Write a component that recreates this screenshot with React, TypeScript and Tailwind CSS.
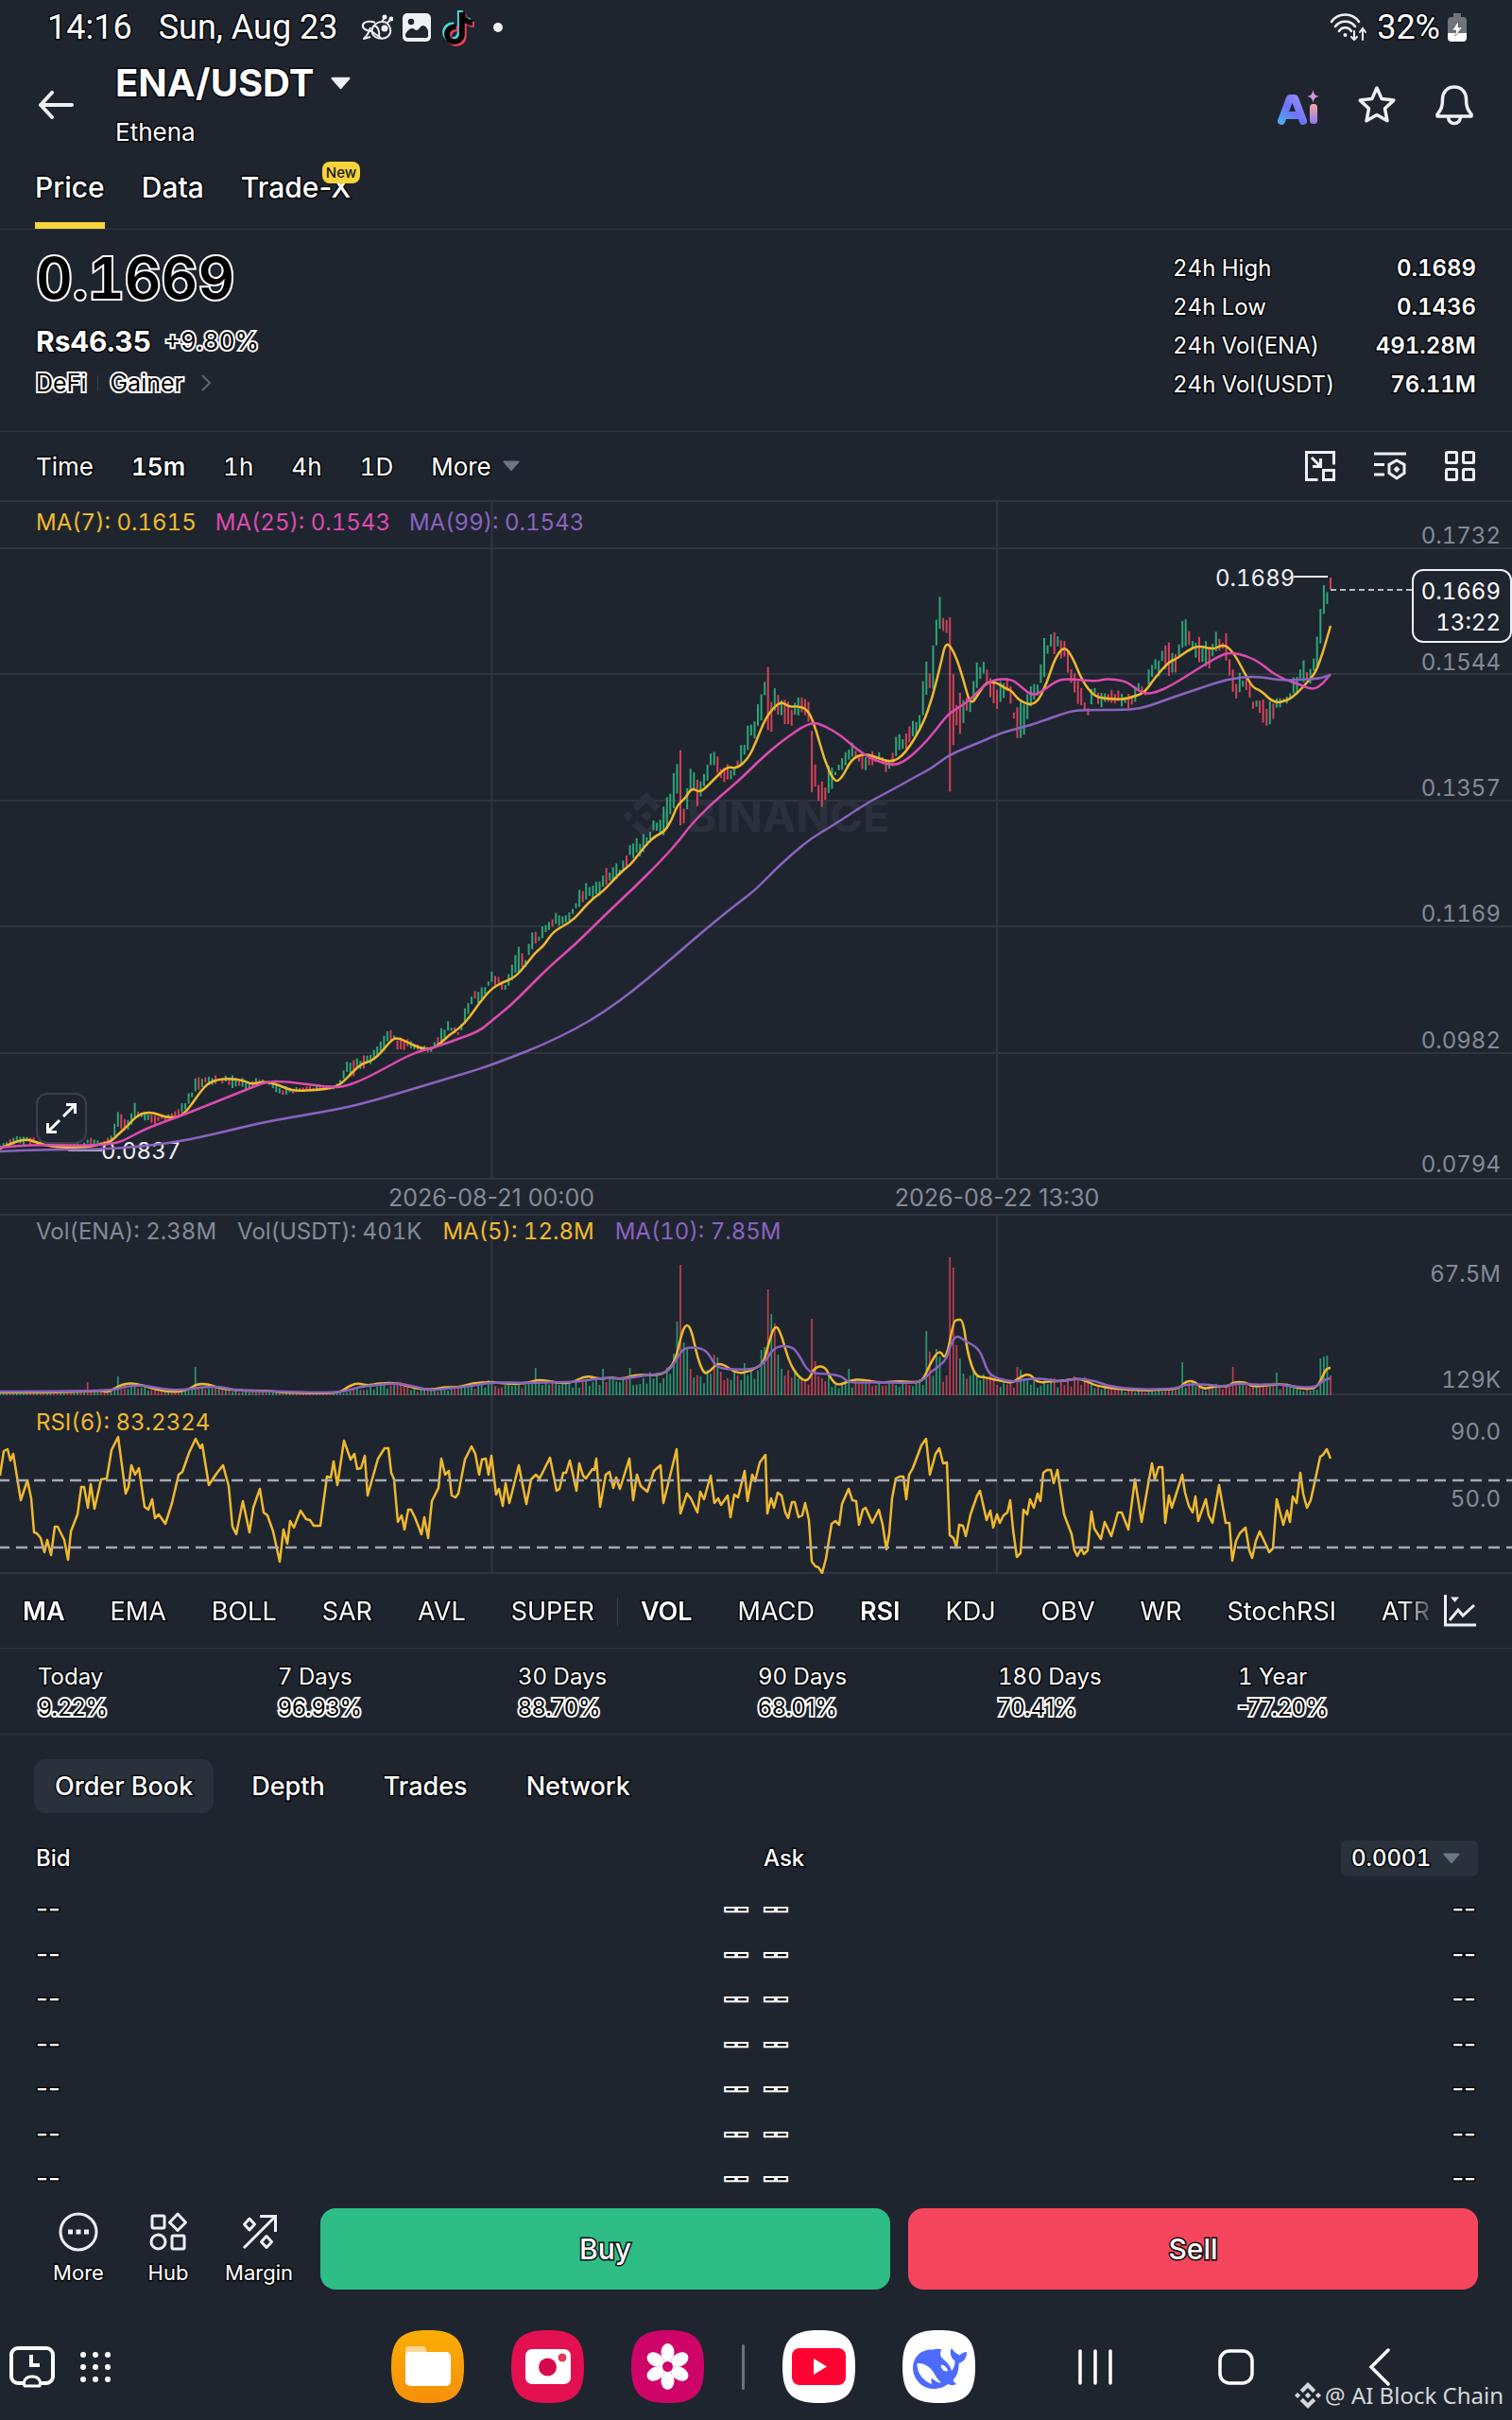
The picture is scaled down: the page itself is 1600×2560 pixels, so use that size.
import { useState } from "react";
import { clsx } from "clsx";
import { FaTiktok } from "react-icons/fa6";

// High-contrast text: light glyphs get a black rim, tinted ones are drawn black with a white rim.
const rim = "text-white [-webkit-text-stroke:3px_#07090c] [paint-order:stroke_fill]";
const hollow = "text-black [-webkit-text-stroke:4px_#fff] [paint-order:stroke_fill]";

const GREEN = "#2ebd85";
const RED = "#f6465d";
const YELLOW = "#f0b92d";
const PINK = "#dd4bb0";
const PURPLE = "#8a63c0";
const GRID = "#2e353f";

type Pt = number[];

const MA7: Pt[] = [
  [0, 1215], [15, 1208], [29, 1205], [40, 1209], [55, 1213], [75, 1214], [95, 1213], [107, 1210], [117, 1208], [125, 1200],
  [135, 1191], [146, 1179], [160, 1176], [175, 1182], [187, 1182], [195, 1178], [203, 1168], [212, 1155], [220, 1146], [230, 1142],
  [243, 1141], [258, 1143], [266, 1147], [280, 1144], [293, 1147], [304, 1152], [314, 1154], [335, 1153], [352, 1151], [362, 1146],
  [372, 1135], [383, 1125], [392, 1123], [402, 1115], [415, 1099], [422, 1098], [432, 1103], [445, 1109], [456, 1110], [466, 1104],
  [475, 1095], [486, 1088], [497, 1076], [508, 1060], [520, 1046], [530, 1040], [545, 1034], [557, 1020], [567, 1007], [575, 1001],
  [585, 986], [597, 979], [608, 972], [618, 960], [628, 950], [638, 943], [650, 930], [660, 920], [668, 914], [680, 898],
  [692, 885], [703, 880], [711, 867], [717, 851], [725, 845], [732, 833], [741, 839], [755, 825], [769, 811], [780, 813],
  [792, 802], [800, 785], [809, 762], [818, 749], [827, 742], [835, 748], [843, 747], [855, 750], [864, 773], [872, 803],
  [883, 828], [891, 823], [901, 803], [914, 797], [927, 801], [944, 807], [958, 797], [976, 768], [987, 737], [996, 700],
  [1001, 678], [1010, 690], [1019, 717], [1027, 747], [1036, 733], [1044, 721], [1055, 722], [1063, 728], [1070, 730], [1079, 742],
  [1096, 747], [1108, 722], [1116, 697], [1126, 683], [1135, 695], [1145, 720], [1158, 737], [1171, 739], [1188, 740], [1199, 737],
  [1211, 733], [1222, 717], [1237, 700], [1245, 697], [1257, 688], [1268, 683], [1284, 687], [1291, 683], [1298, 683], [1307, 693],
  [1317, 712], [1326, 728], [1334, 730], [1348, 744], [1363, 741], [1374, 732], [1383, 722], [1392, 712], [1400, 690], [1408, 662],
];

const MA25: Pt[] = [
  [0, 1214], [20, 1212], [50, 1211], [90, 1212], [120, 1210], [132, 1206], [150, 1196], [170, 1188], [187, 1182], [210, 1173],
  [240, 1161], [270, 1149], [283, 1144], [300, 1144], [325, 1147], [350, 1150], [362, 1150], [380, 1144], [400, 1134], [420, 1123],
  [440, 1113], [460, 1108], [485, 1099], [507, 1091], [520, 1080], [540, 1064], [560, 1044], [582, 1022], [610, 998], [640, 968],
  [670, 940], [700, 910], [718, 890], [730, 874], [750, 853], [771, 835], [788, 820], [804, 804], [827, 784], [858, 763],
  [873, 768], [890, 778], [907, 793], [924, 804], [945, 810], [958, 805], [975, 790], [988, 775], [1002, 757], [1010, 751],
  [1025, 742], [1037, 729], [1050, 719], [1070, 718], [1080, 726], [1092, 736], [1102, 732], [1118, 720], [1130, 718], [1160, 721],
  [1170, 718], [1190, 720], [1200, 727], [1210, 734], [1222, 733], [1240, 725], [1270, 706], [1290, 694], [1302, 690], [1320, 694],
  [1335, 702], [1345, 711], [1360, 719], [1375, 724], [1390, 730], [1400, 723], [1408, 713],
];

const MA99: Pt[] = [
  [0, 1218], [50, 1216], [100, 1216], [150, 1213], [200, 1206], [250, 1194], [280, 1187], [320, 1180], [365, 1172], [400, 1163],
  [440, 1151], [480, 1139], [510, 1130], [540, 1119], [575, 1105], [610, 1088], [640, 1070], [670, 1048], [700, 1023], [720, 1006],
  [750, 980], [780, 956], [800, 941], [820, 920], [840, 902], [858, 887], [880, 874], [900, 861], [920, 848], [945, 835],
  [970, 821], [987, 812], [1002, 800], [1020, 792], [1040, 784], [1060, 775], [1080, 770], [1100, 764], [1130, 753], [1145, 751],
  [1190, 751], [1210, 749], [1240, 738], [1270, 728], [1300, 718], [1330, 715], [1355, 720], [1375, 719], [1395, 718], [1408, 714],
];

// x, high, low of the candle envelope
const RANGE: Pt[] = [
  [0, 1212, 1217], [14, 1199, 1210], [30, 1203, 1210], [60, 1209, 1214], [89, 1208, 1214], [93, 1203, 1212], [110, 1207, 1211],
  [117, 1200, 1210], [125, 1176, 1192], [133, 1186, 1196], [142, 1168, 1186], [152, 1174, 1184], [163, 1178, 1188], [176, 1180, 1184],
  [190, 1172, 1182], [203, 1150, 1165], [207, 1137, 1155], [217, 1135, 1148], [225, 1138, 1147], [237, 1136, 1146], [250, 1140, 1152],
  [262, 1142, 1152], [273, 1139, 1147], [285, 1143, 1148], [295, 1150, 1158], [310, 1150, 1156], [350, 1148, 1153], [361, 1142, 1148],
  [366, 1117, 1140], [375, 1119, 1136], [385, 1115, 1129], [397, 1110, 1122], [408, 1088, 1108], [414, 1089, 1098], [422, 1098, 1112],
  [432, 1100, 1110], [445, 1106, 1112], [457, 1107, 1113], [465, 1090, 1105], [475, 1078, 1095], [485, 1090, 1096], [493, 1065, 1080],
  [500, 1050, 1060], [508, 1048, 1060], [515, 1036, 1050], [520, 1026, 1045], [527, 1032, 1042], [534, 1035, 1052], [541, 1024, 1040],
  [549, 1000, 1030], [556, 1012, 1025], [563, 988, 1006], [572, 984, 996], [584, 968, 980], [595, 965, 985], [606, 957, 968],
  [615, 938, 958], [622, 935, 952], [632, 926, 952], [641, 919, 938], [655, 912, 932], [662, 905, 916], [668, 885, 910],
  [675, 882, 905], [683, 884, 905], [690, 870, 880], [697, 862, 878], [702, 853, 886], [710, 840, 870], [716, 782, 833],
  [720, 793, 873], [723, 850, 880], [728, 820, 860], [733, 812, 835], [740, 820, 860], [748, 803, 825], [755, 789, 810],
  [762, 802, 832], [772, 805, 835], [780, 802, 820], [788, 778, 800], [795, 762, 785], [803, 745, 775], [809, 712, 738],
  [813, 705, 775], [816, 740, 787], [820, 725, 762], [826, 732, 750], [832, 738, 775], [838, 742, 765], [842, 730, 760],
  [848, 740, 760], [855, 742, 755], [858, 760, 838], [862, 810, 838], [868, 823, 851], [874, 825, 848], [878, 808, 845],
  [884, 812, 822], [893, 797, 815], [900, 782, 800], [906, 790, 802], [912, 798, 822], [920, 798, 810], [930, 792, 808],
  [937, 802, 815], [944, 800, 815], [948, 778, 802], [955, 776, 795], [963, 768, 790], [970, 760, 780], [975, 740, 770],
  [980, 680, 733], [984, 702, 728], [987, 672, 725], [994, 633, 665], [998, 640, 678], [1002, 648, 675], [1005, 649, 841],
  [1008, 710, 790], [1013, 730, 778], [1020, 730, 765], [1026, 735, 755], [1032, 700, 735], [1037, 697, 720], [1041, 687, 715],
  [1046, 712, 740], [1054, 725, 750], [1060, 722, 738], [1068, 715, 735], [1074, 745, 778], [1080, 745, 790], [1084, 735, 770],
  [1091, 720, 745], [1100, 715, 730], [1105, 672, 715], [1112, 670, 690], [1120, 665, 690], [1125, 670, 700], [1131, 692, 712],
  [1140, 715, 745], [1147, 735, 752], [1151, 740, 762], [1158, 720, 735], [1163, 730, 755], [1170, 730, 742], [1180, 732, 747],
  [1190, 730, 745], [1197, 735, 750], [1204, 720, 735], [1213, 725, 735], [1217, 695, 718], [1225, 690, 715], [1230, 683, 705],
  [1237, 683, 718], [1244, 690, 712], [1251, 660, 685], [1254, 652, 680], [1260, 672, 690], [1270, 675, 700], [1280, 683, 712],
  [1288, 663, 685], [1297, 670, 700], [1305, 710, 740], [1310, 715, 742], [1318, 712, 725], [1326, 732, 755], [1334, 735, 755],
  [1340, 745, 770], [1348, 738, 757], [1356, 735, 745], [1363, 728, 748], [1370, 717, 738], [1378, 697, 718], [1385, 710, 727],
  [1391, 695, 712], [1397, 643, 690], [1400, 625, 660], [1404, 610, 648], [1408, 610, 627],
];

const VOL_MA5: Pt[] = [
  [0, 1473], [50, 1473], [90, 1472], [108, 1471], [115, 1473], [125, 1466], [137, 1463], [150, 1465], [165, 1470], [185, 1473],
  [200, 1470], [208, 1464], [220, 1464], [230, 1468], [250, 1471], [280, 1471], [300, 1473], [340, 1474], [360, 1473], [368, 1467],
  [378, 1463], [390, 1466], [402, 1463], [422, 1463], [440, 1469], [460, 1470], [470, 1467], [485, 1468], [500, 1463], [520, 1462],
  [540, 1464], [560, 1463], [570, 1459], [590, 1463], [605, 1463], [620, 1455], [635, 1459], [645, 1457], [660, 1459], [672, 1454],
  [690, 1455], [703, 1453], [712, 1444], [717, 1430], [722, 1408], [727, 1400], [732, 1408], [738, 1436], [745, 1454], [752, 1450],
  [758, 1443], [765, 1443], [780, 1453], [792, 1451], [800, 1447], [808, 1442], [813, 1422], [820, 1401], [826, 1409], [835, 1441],
  [845, 1457], [855, 1462], [862, 1446], [873, 1445], [880, 1460], [887, 1466], [900, 1460], [912, 1459], [930, 1463], [950, 1461],
  [965, 1462], [976, 1462], [984, 1443], [994, 1427], [1001, 1440], [1009, 1398], [1013, 1396], [1019, 1396], [1024, 1432], [1032, 1456],
  [1042, 1457], [1060, 1461], [1072, 1463], [1080, 1456], [1090, 1453], [1098, 1463], [1112, 1461], [1125, 1461], [1140, 1458], [1150, 1461],
  [1160, 1466], [1180, 1469], [1210, 1471], [1230, 1470], [1248, 1469], [1255, 1461], [1264, 1461], [1273, 1470], [1285, 1466], [1300, 1467],
  [1305, 1462], [1318, 1462], [1325, 1467], [1345, 1465], [1360, 1464], [1375, 1469], [1392, 1469], [1398, 1460], [1403, 1448], [1408, 1447],
];

const VOL_MA10: Pt[] = [
  [0, 1472], [115, 1472], [130, 1467], [150, 1465], [170, 1469], [190, 1471], [215, 1467], [235, 1467], [250, 1471], [300, 1472],
  [330, 1473], [362, 1473], [380, 1467], [400, 1465], [420, 1463], [440, 1467], [455, 1471], [480, 1468], [500, 1466], [520, 1462],
  [560, 1463], [590, 1462], [610, 1462], [640, 1457], [660, 1459], [680, 1455], [705, 1453], [715, 1440], [722, 1427], [732, 1425],
  [745, 1427], [752, 1435], [758, 1447], [780, 1449], [800, 1448], [810, 1440], [820, 1424], [838, 1424], [846, 1434], [856, 1453],
  [875, 1453], [892, 1456], [897, 1463], [930, 1462], [960, 1463], [975, 1462], [985, 1451], [1001, 1440], [1006, 1422], [1012, 1412],
  [1022, 1419], [1037, 1427], [1045, 1452], [1055, 1458], [1072, 1462], [1085, 1459], [1105, 1458], [1120, 1462], [1140, 1458], [1160, 1461],
  [1175, 1467], [1205, 1470], [1245, 1469], [1255, 1464], [1280, 1465], [1295, 1467], [1310, 1463], [1330, 1465], [1350, 1464], [1370, 1467],
  [1392, 1468], [1400, 1460], [1408, 1458],
];

// x, top, 1 = rising / 0 = falling
const SPIKES: Pt[] = [
  [93, 1462, 0], [125, 1456, 1], [207, 1446, 1], [566, 1447, 1], [638, 1448, 1], [666, 1447, 1], [713, 1432, 1], [717, 1398, 1],
  [720, 1338, 0], [724, 1420, 1], [727, 1427, 1], [731, 1448, 0], [755, 1433, 0], [759, 1436, 1], [788, 1442, 1], [805, 1428, 1],
  [809, 1425, 1], [813, 1364, 0], [816, 1390, 1], [820, 1400, 0], [823, 1433, 1], [859, 1395, 0], [863, 1440, 0], [898, 1448, 1],
  [980, 1408, 1], [984, 1430, 0], [991, 1427, 1], [994, 1435, 1], [1005, 1330, 0], [1009, 1341, 0], [1012, 1423, 0], [1016, 1437, 1],
  [1076, 1446, 0], [1080, 1449, 1], [1251, 1441, 1], [1304, 1446, 0], [1350, 1452, 1], [1397, 1437, 1], [1400, 1435, 1], [1404, 1434, 1],
];

const RSI =
  "0,1561 4,1535 8,1533 11,1545 14,1538 22,1587 29,1566 33,1585 36,1621 39,1622 43,1627 47,1642 50,1629 54,1645 58,1615 61,1615 68,1629 72,1650 75,1620 82,1602 86,1573 89,1573 93,1595 96,1570 100,1596 107,1565 113,1564 118,1534 125,1520 133,1580 136,1573 139,1550 143,1560 147,1553 153,1594 157,1597 161,1586 164,1606 168,1602 175,1612 182,1590 189,1560 193,1557 200,1537 207,1522 212,1532 214,1528 221,1571 229,1559 236,1550 242,1572 246,1615 250,1623 257,1588 264,1621 268,1595 275,1575 279,1600 283,1603 289,1620 296,1652 300,1618 304,1633 307,1609 311,1616 318,1598 324,1607 328,1608 332,1614 339,1614 346,1562 350,1563 353,1546 357,1571 364,1524 371,1544 375,1538 378,1554 382,1553 386,1540 389,1582 400,1543 407,1532 411,1532 414,1558 417,1565 421,1610 425,1603 428,1618 432,1597 435,1597 439,1605 446,1623 449,1605 453,1627 457,1588 464,1574 467,1543 471,1560 475,1556 478,1582 482,1584 485,1580 492,1544 499,1530 503,1538 507,1560 510,1544 514,1543 517,1560 520,1540 525,1581 528,1575 532,1593 535,1569 539,1590 549,1550 557,1591 562,1565 567,1560 571,1564 582,1542 589,1577 592,1575 596,1558 599,1558 603,1545 610,1577 613,1548 617,1561 620,1564 627,1554 629,1555 631,1543 635,1594 641,1560 645,1557 649,1574 652,1563 656,1575 666,1543 670,1587 674,1560 678,1572 685,1578 692,1556 699,1550 702,1590 716,1533 720,1601 727,1580 731,1585 738,1600 741,1578 745,1586 752,1561 756,1590 760,1585 763,1592 770,1582 773,1605 777,1581 781,1584 788,1556 791,1588 796,1560 799,1567 " +
  "804,1547 810,1539 812,1601 816,1585 819,1595 823,1579 827,1582 831,1600 834,1606 838,1589 841,1589 845,1605 849,1603 852,1590 856,1608 859,1652 863,1657 866,1658 870,1664 874,1649 880,1612 884,1609 888,1613 891,1591 898,1575 902,1587 906,1588 909,1613 913,1597 916,1595 923,1611 930,1597 934,1613 938,1639 941,1622 944,1585 948,1564 952,1562 956,1562 959,1586 962,1560 966,1553 975,1529 980,1522 984,1560 990,1538 994,1532 998,1548 1002,1547 1005,1624 1009,1627 1012,1637 1015,1613 1019,1614 1022,1625 1027,1602 1034,1582 1037,1577 1044,1608 1048,1598 1051,1616 1055,1602 1058,1611 1062,1603 1066,1600 1069,1587 1072,1618 1076,1647 1080,1643 1083,1597 1087,1602 1090,1586 1094,1595 1098,1580 1101,1588 1104,1558 1108,1555 1112,1555 1115,1569 1119,1555 1126,1602 1134,1623 1137,1640 1140,1646 1144,1638 1147,1644 1151,1640 1155,1599 1158,1617 1165,1628 1169,1610 1176,1625 1183,1600 1187,1600 1194,1618 1201,1565 1208,1610 1215,1570 1219,1548 1222,1565 1226,1552 1230,1552 1233,1611 1237,1582 1240,1595 1247,1573 1251,1560 1254,1579 1258,1593 1262,1600 1265,1583 1268,1609 1276,1586 1279,1603 1283,1611 1290,1571 1297,1611 1301,1611 1304,1651 1308,1630 1312,1622 1318,1616 1322,1640 1325,1648 1329,1630 1333,1620 1340,1635 1343,1642 1347,1638 1351,1586 1358,1613 1362,1598 1365,1610 1368,1583 1372,1590 1376,1558 1379,1580 1383,1595 1387,1587 1391,1569 1397,1541 1400,1539 1404,1533 1408,1543";

function interp(pts: Pt[], x: number, k = 1) {
  const i = pts.findIndex((p) => p[0] >= x);
  if (i <= 0) return pts[i < 0 ? pts.length - 1 : 0][k];
  const a = pts[i - 1];
  const b = pts[i];
  return a[k] + ((b[k] - a[k]) * (x - a[0])) / (b[0] - a[0]);
}

// Cheap deterministic noise so every render gives the same bars
function noise(n: number) {
  const s = Math.sin(n * 127.1) * 43758.5453;
  return s - Math.floor(s);
}

// Midpoint-smoothed path
function smooth(pts: Pt[]) {
  let d = `M${pts[0][0]} ${pts[0][1]}`;
  for (let i = 1; i < pts.length - 1; i++) {
    const mx = (pts[i][0] + pts[i + 1][0]) / 2;
    const my = (pts[i][1] + pts[i + 1][1]) / 2;
    d += `Q${pts[i][0]} ${pts[i][1]} ${mx} ${my}`;
  }
  const last = pts[pts.length - 1];
  return `${d}L${last[0]} ${last[1]}`;
}

const COUNT = 396;
const STEP = 1408 / (COUNT - 1);

const candles = Array.from({ length: COUNT }, (_, i) => {
  const x = i * STEP;
  const hi = interp(RANGE, x, 1);
  const lo = interp(RANGE, x, 2);
  const size = lo - hi;
  const big = size > 60;
  const top = hi + (big ? 0 : (noise(i) - 0.2) * size * 0.6);
  const bottom = lo - (big ? 0 : (noise(i + 900) - 0.3) * size * 0.5);
  const prev = interp(RANGE, x - STEP, 1) + interp(RANGE, x - STEP, 2);
  const drift = prev - (hi + lo);
  const up = big ? drift > 0 : drift / 9 + (noise(i + 300) - 0.5) * 3 > 0;
  return { x, top, bottom, up: up && i < COUNT - 1 };
});

const volumes = candles.map((c, i) => {
  const spike = SPIKES.find((s) => Math.abs(s[0] - c.x) <= STEP / 2);
  if (spike) return { x: c.x, top: spike[1], up: spike[2] === 1 };
  const avg = Math.min(1476 - interp(VOL_MA5, c.x), 1476 - interp(VOL_MA10, c.x), 24);
  return { x: c.x, top: 1476 - avg * (0.55 + noise(i + 50) * 0.7), up: c.up };
});

function Caret({ className }: { className?: string }) {
  return (
    <svg viewBox="0 0 20 12" className={className} fill="currentColor" aria-hidden="true">
      <path d="M1.5 0h17a1 1 0 0 1 .8 1.6l-8.5 9.8a1 1 0 0 1-1.6 0L.7 1.6A1 1 0 0 1 1.5 0z" />
    </svg>
  );
}

function BinanceMark({ className }: { className?: string }) {
  return (
    <svg viewBox="0 0 24 24" className={className} fill="currentColor" aria-hidden="true">
      <path d="M12 0 4.9 7.1l2.6 2.6L12 5.2l4.5 4.5 2.6-2.6zM2.6 9.4 0 12l2.6 2.6L5.2 12zM21.4 9.4 18.8 12l2.6 2.6L24 12zM12 9.3 9.3 12l2.7 2.7 2.7-2.7zM7.5 14.3l-2.6 2.6L12 24l7.1-7.1-2.6-2.6-4.5 4.5z" />
    </svg>
  );
}

function StatusBar() {
  return (
    <div className={clsx("flex h-14 items-center pt-0.5 pr-12 pl-[50px] font-['Roboto',sans-serif] text-[36px] leading-13", rim)}>
      <span>14:16</span>
      <span className="ml-7">Sun, Aug 23</span>
      <svg viewBox="0 0 34 28" className="ml-6 h-7 w-[34px]" fill="none" stroke="#eef0f4" strokeWidth="2" strokeLinejoin="round" aria-hidden="true">
        <path d="M15 9C11 7 4 7 2 11c-1 4 3 6 8 7M14 12c4-5 12-5 15-1s3 9 0 12-9 4-14 1c-4-3-5-8-1-12z" />
        <path d="M10 14c-1 4-3 8-7 12l7-2M8 16l13 9M14 12c4 1 6 6 5 12M22 8l3-4M28 9l4-4" />
        <circle cx="25" cy="3" r="1.500" fill="#eef0f4" />
        <circle cx="32" cy="5" r="1.500" fill="#eef0f4" />
        <circle cx="25" cy="15" r="2.500" fill="#eef0f4" />
      </svg>
      <svg viewBox="0 0 30 30" className="ml-2.5 size-[30px]" aria-hidden="true">
        <rect width="30" height="30" rx="5" fill="#eef0f4" />
        <circle cx="9" cy="9" r="3.200" fill="#1f252f" />
        <path d="M3 23c0-2 4-7 7-7 2 0 3 2 5 2s4-5 7-5c2 0 5 4 5 6v5c0 1-1 2-2 2H5c-1 0-2-1-2-3z" fill="#1f252f" />
      </svg>
      <span className="relative ml-2.5 size-9">
        <FaTiktok className="absolute top-0 left-0 size-[34px] text-[#4fd5dc]" />
        <FaTiktok className="absolute top-1 left-1 size-[34px] text-[#e8405f]" />
        <FaTiktok className="absolute top-0.5 left-0.5 size-[34px] text-black" />
      </span>
      <span className="ml-5 size-2.5 rounded-full bg-[#eef0f4]" />
      <svg viewBox="0 0 40 30" className="ml-auto h-[30px] w-10" fill="none" stroke="#eef0f4" strokeWidth="2.6" strokeLinecap="round" aria-hidden="true">
        <path d="M2 9C9-1 24-1 31 9M6 14c5-7 16-7 21 0M10 19c3-5 10-5 13 0" />
        <circle cx="16.500" cy="23" r="2" fill="#eef0f4" stroke="none" />
        <path d="M26 19v9m-3-3 3 3 3-3M35 28V16m-3 4 3-4 3 4" strokeWidth="2" />
      </svg>
      <span className="ml-2.5">32%</span>
      <svg viewBox="0 0 20 30" className="ml-2 h-[30px] w-5" aria-hidden="true">
        <path d="M6 0h8v4h2a4 4 0 0 1 4 4v14H0V8a4 4 0 0 1 4-4h2z" fill="#70747c" />
        <path d="M0 21h20v5a4 4 0 0 1-4 4H4a4 4 0 0 1-4-4z" fill="#fff" />
        <path d="M11 9 5 18h4l-1 6 7-9h-4z" fill="#fff" stroke="#1f252f" strokeWidth=".8" />
      </svg>
    </div>
  );
}

function Header() {
  return (
    <header className="flex items-center pr-10 pl-10">
      <button aria-label="Back">
        <svg viewBox="0 0 38 30" className="h-[30px] w-[38px]" fill="none" stroke="#eef0f4" strokeWidth="4" strokeLinecap="round" strokeLinejoin="round">
          <path d="M15 2 3 15l12 13M3 15h33" />
        </svg>
      </button>
      <div className="ml-11 pt-[5px]">
        <button className="flex items-center gap-[18px]">
          <h1 className={clsx("text-[40px] leading-[53px] font-bold", rim)}>ENA/USDT</h1>
          <Caret className="h-[14px] w-[21px] text-[#eef0f4]" />
        </button>
        <p className={clsx("text-[26px] leading-[51px]", rim)}>Ethena</p>
      </div>
      <div className="ml-auto flex items-center gap-10">
        <button aria-label="AI assistant">
          <svg viewBox="0 0 44 42" className="h-[42px] w-11">
            <defs>
              <linearGradient id="ai-a" x1="0" y1="1" x2="1" y2="0">
                <stop offset="0" stopColor="#4fa4f3" />
                <stop offset=".45" stopColor="#6d73f5" />
                <stop offset="1" stopColor="#a08cf8" />
              </linearGradient>
              <linearGradient id="ai-b" x1="0" y1="1" x2="0" y2="0">
                <stop offset="0" stopColor="#8f78f4" />
                <stop offset="1" stopColor="#f3a9a0" />
              </linearGradient>
            </defs>
            <path d="M4 38 13 14h5l9 24M9 32h13" fill="none" stroke="url(#ai-a)" strokeWidth="8" strokeLinecap="round" strokeLinejoin="round" />
            <rect x="34" y="20" width="8" height="21" rx="3.500" fill="url(#ai-b)" />
            <path d="M37.500 5c1 5 2.500 6 6 7-3.500 1-5 2-6 7-1-5-2.500-6-6-7 3.500-1 5-2 6-7z" fill="#cf93d8" />
          </svg>
        </button>
        <button aria-label="Favourite">
          <svg viewBox="0 0 42 42" className="size-[42px]" fill="none" stroke="#eef0f4" strokeWidth="3.500" strokeLinejoin="round">
            <path d="m21 3 5.200 11.600 12.600 1.500-9.300 8.700 2.500 13L21 31.500 10 37.800l2.500-13-9.300-8.700 12.600-1.500z" />
          </svg>
        </button>
        <button aria-label="Alerts">
          <svg viewBox="0 0 42 44" className="h-11 w-[42px]" fill="none" stroke="#eef0f4" strokeWidth="3.500" strokeLinejoin="round">
            <path d="M21 3C13 3 8.500 9 8.500 16c0 8-1.500 11-5.500 16v2h36v-2c-4-5-5.500-8-5.500-16C33.500 9 29 3 21 3z" />
            <path d="M14.500 35c.5 4 3 6.500 6.500 6.500s6-2.500 6.500-6.500" />
          </svg>
        </button>
      </div>
    </header>
  );
}

const SECTIONS = ["Price", "Data", "Trade-X"];

function SectionTabs() {
  const [active, setActive] = useState("Price");
  return (
    <nav className="flex h-[78px] gap-[39px] border-b border-[#2e353f] px-[37px]">
      {SECTIONS.map((name) => (
        <button key={name} onClick={() => setActive(name)} className={clsx("relative h-[77px] pb-[11px] text-[30px] leading-[66px] font-medium", rim)}>
          {name}
          {active === name && <span className="absolute inset-x-0 bottom-0 h-[7px] bg-[#f8d33a]" />}
          {name === "Trade-X" && (
            <span className="absolute top-1.5 -right-2.5 rounded-lg bg-[#f8d33a] px-1 text-[15px] leading-[23px] text-[#14181f] [-webkit-text-stroke:0]">New</span>
          )}
        </button>
      ))}
    </nav>
  );
}

const DAY_STATS = [
  ["24h High", "0.1689"],
  ["24h Low", "0.1436"],
  ["24h Vol(ENA)", "491.28M"],
  ["24h Vol(USDT)", "76.11M"],
];

function Summary() {
  return (
    <section className="flex justify-between border-b border-[#2e353f] pr-[38px] pl-[38px]">
      <div className="pt-[15px] pb-[38px] tabular-nums">
        <p className={clsx("text-[60px] leading-[72px] font-semibold", hollow)}>0.1669</p>
        <p className="flex gap-3.5 leading-[62px]">
          <span className={clsx("text-[30px] font-bold", rim)}>Rs46.35</span>
          <span className={clsx("text-[26px]", hollow)}>+9.80%</span>
        </p>
        <div className={clsx("flex items-center text-[25px] leading-[26px]", hollow)}>
          <a href="#defi">DeFi</a>
          <span className="mx-3 h-4 w-px bg-[#39414d]" />
          <a href="#gainer">Gainer</a>
          <svg viewBox="0 0 12 18" className="ml-[18px] h-[18px] w-3" fill="none" stroke="#5c6573" strokeWidth="2" aria-hidden="true">
            <path d="m2 1 8 8-8 8" />
          </svg>
        </div>
      </div>
      <dl className={clsx("w-[321px] pt-5 text-[24px] leading-[41px] tabular-nums", rim)}>
        {DAY_STATS.map(([label, value]) => (
          <div key={label} className="flex justify-between">
            <dt>{label}</dt>
            <dd className="font-semibold">{value}</dd>
          </div>
        ))}
      </dl>
    </section>
  );
}

const INTERVALS = ["Time", "15m", "1h", "4h", "1D"];

function IntervalBar() {
  const [active, setActive] = useState("15m");
  return (
    <div className={clsx("flex h-[72px] items-center pr-[38px] pl-[38px] text-[26px] tabular-nums", rim)}>
      <div className="flex gap-10">
        {INTERVALS.map((name) => (
          <button key={name} onClick={() => setActive(name)} className={clsx(active === name && "font-semibold")}>
            {name}
          </button>
        ))}
        <button className="flex items-center gap-3">
          More
          <Caret className="h-3 w-[18px] text-[#6d7686]" />
        </button>
      </div>
      <div className="ml-auto flex gap-10">
        <button aria-label="Floating window">
          <svg viewBox="0 0 34 34" className="size-[34px]" fill="none" stroke="#eef0f4" strokeWidth="3">
            <path d="M31.500 15.500v-13h-29v29h12M8 8l9 9M17.500 9v8.500H9" />
            <rect x="20.500" y="21.500" width="11" height="10" />
          </svg>
        </button>
        <button aria-label="Chart settings">
          <svg viewBox="0 0 34 34" className="size-[34px]" fill="none" stroke="#eef0f4" strokeWidth="3">
            <path d="M0 4h34M0 15.500h11M0 26h11" />
            <path d="m24 11 8 4.500v9L24 30l-8-5.500v-9z" />
            <path d="m24 17 3.500 3.500L24 24l-3.500-3.500z" fill="#eef0f4" stroke="none" />
          </svg>
        </button>
        <button aria-label="Layout">
          <svg viewBox="0 0 34 34" className="size-[34px]" fill="none" stroke="#eef0f4" strokeWidth="3">
            <rect x="2.500" y="2.500" width="11" height="11" rx="1" />
            <rect x="20.500" y="2.500" width="11" height="11" rx="1" />
            <rect x="2.500" y="20.500" width="11" height="11" rx="1" />
            <rect x="20.500" y="20.500" width="11" height="11" rx="1" />
          </svg>
        </button>
      </div>
    </div>
  );
}

function Axis({ y, children }: { y: number; children: string }) {
  return (
    <text x="1588" y={y} textAnchor="end" fontSize="24" fill="#848b96" className="tabular-nums">
      {children}
    </text>
  );
}

const PRICE_TICKS: [number, string][] = [
  [575, "0.1732"],
  [709, "0.1544"],
  [842, "0.1357"],
  [975, "0.1169"],
  [1109, "0.0982"],
  [1240, "0.0794"],
];

function PricePane() {
  return (
    <div className="relative">
      <svg viewBox="0 529 1600 755" className="block w-full">
        <g stroke={GRID} strokeWidth="2">
          {[530, 580, 713, 847, 980, 1114, 1247].map((y) => (
            <path key={y} d={`M0 ${y}H1600`} />
          ))}
          <path d="M520.500 529V1247M1055 529V1247" />
        </g>
        <g fill="#2a313c">
          <svg x="659" y="838" width="50" height="50" viewBox="0 0 24 24">
            <path d="M12 0 4.900 7.100l2.600 2.600L12 5.200l4.500 4.500 2.600-2.600zM2.600 9.400 0 12l2.600 2.600L5.200 12zM21.400 9.400 18.800 12l2.600 2.600L24 12zM12 9.300 9.300 12l2.700 2.700 2.700-2.700zM7.500 14.300l-2.600 2.600L12 24l7.100-7.100-2.600-2.600-4.500 4.500z" />
          </svg>
          <text x="727" y="880" fontSize="47" fontWeight="700">BINANCE</text>
        </g>
        <text x="107" y="1226" fontSize="24" fill="#eef0f4" className="tabular-nums">0.0837</text>
        <path d="M72 1217h36" stroke="#eef0f4" strokeWidth="1.5" />
        {candles.map((c) => (
          <path key={c.x} d={`M${c.x.toFixed(1)} ${c.top.toFixed(1)}V${c.bottom.toFixed(1)}`} stroke={c.up ? GREEN : RED} strokeWidth="2" opacity=".85" />
        ))}
        <g fill="none" strokeWidth="2.5" strokeLinejoin="round">
          <path d={smooth(MA7)} stroke={YELLOW} />
          <path d={smooth(MA25)} stroke={PINK} />
          <path d={smooth(MA99)} stroke={PURPLE} />
        </g>
        {PRICE_TICKS.map(([y, label]) => (
          <Axis key={label} y={y}>{label}</Axis>
        ))}
        <text x="1286" y="620" fontSize="24" fill="#eef0f4" className="tabular-nums">0.1689</text>
        <path d="M1369 610h36" stroke="#eef0f4" strokeWidth="2" />
        <path d="M1408 624h87" stroke="#eef0f4" strokeWidth="1.500" strokeDasharray="6 4" />
        <rect x="1495" y="603" width="104" height="76" rx="11" fill="#1f252f" stroke="#eef0f4" strokeWidth="2" />
        <g fontSize="24" fill="#fff" textAnchor="end" className="tabular-nums">
          <text x="1588" y="634">0.1669</text>
          <text x="1588" y="667">13:22</text>
        </g>
        <g fontSize="25" fill="#848b96" textAnchor="middle">
          <text x="520" y="1276">2026-08-21 00:00</text>
          <text x="1055" y="1276">2026-08-22 13:30</text>
        </g>
      </svg>
      <div className="absolute top-0 left-[38px] flex gap-5 text-[24px] leading-[47px] tabular-nums">
        <span className="text-[#f0b92d]">MA(7): 0.1615</span>
        <span className="text-[#dd4bb0]">MA(25): 0.1543</span>
        <span className="text-[#8a63c0]">MA(99): 0.1543</span>
      </div>
      <button aria-label="Full screen" className="absolute bottom-[74px] left-[38px] flex size-[54px] items-center justify-center rounded-xl border-2 border-[#39404b] bg-[#1f252f]/80">
        <svg viewBox="0 0 34 34" className="size-[34px]" fill="none" stroke="#fff" strokeWidth="3">
          <path d="m19 15 12-12M22 2.500h9.500V12M15 19 3 31M2.500 22v9.500H12" />
        </svg>
      </button>
    </div>
  );
}

function VolumePane() {
  return (
    <div className="relative">
      <svg viewBox="0 1284 1600 192" className="block w-full">
        <g stroke={GRID} strokeWidth="2">
          <path d="M0 1285H1600M0 1475H1600M520.500 1284V1476M1055 1284V1476" />
        </g>
        {volumes.map((v) => (
          <path key={v.x} d={`M${v.x.toFixed(1)} ${v.top.toFixed(1)}V1476`} stroke={v.up ? GREEN : RED} strokeWidth="1.700" opacity=".75" />
        ))}
        <g fill="none" strokeWidth="2.500" strokeLinejoin="round">
          <path d={smooth(VOL_MA5)} stroke={YELLOW} />
          <path d={smooth(VOL_MA10)} stroke={PURPLE} />
        </g>
        <Axis y={1356}>67.5M</Axis>
        <Axis y={1468}>129K</Axis>
      </svg>
      <div className="absolute top-0 left-[38px] flex gap-[22px] text-[24px] leading-[37px] tabular-nums">
        <span className="text-[#848b96]">Vol(ENA): 2.38M</span>
        <span className="text-[#848b96]">Vol(USDT): 401K</span>
        <span className="text-[#f0b92d]">MA(5): 12.8M</span>
        <span className="text-[#8a63c0]">MA(10): 7.85M</span>
      </div>
    </div>
  );
}

function RsiPane() {
  return (
    <div className="relative">
      <svg viewBox="0 1476 1600 189" className="block w-full">
        <path d="M520.500 1476V1664M1055 1476V1664M0 1664H1600" stroke={GRID} strokeWidth="2" />
        <polyline points={RSI} fill="none" stroke={YELLOW} strokeWidth="2.500" strokeLinejoin="round" />
        <path d="M-2 1566H1600M-2 1637H1600" stroke="#a6a9ae" strokeWidth="2.500" strokeDasharray="12 7" />
        <Axis y={1523}>90.0</Axis>
        <Axis y={1594}>50.0</Axis>
      </svg>
      <p className="absolute top-[10px] left-[38px] text-[24px] leading-[37px] text-[#f0b92d] tabular-nums">RSI(6): 83.2324</p>
    </div>
  );
}

const OVERLAYS = ["MA", "EMA", "BOLL", "SAR", "AVL", "SUPER"];
const OSCILLATORS = ["VOL", "MACD", "RSI", "KDJ", "OBV", "WR", "StochRSI", "ATR"];

function IndicatorBar() {
  const [on, setOn] = useState(["MA", "VOL", "RSI"]);
  const toggle = (name: string) => setOn(on.includes(name) ? on.filter((n) => n !== name) : [...on, name]);
  const renderItem = (name: string) => (
    <button key={name} onClick={() => toggle(name)} className={clsx("shrink-0", on.includes(name) && "font-semibold")}>
      {name}
    </button>
  );
  return (
    <div className={clsx("flex h-[79px] items-center border-b border-[#2e353f] pr-[38px] pl-6 text-[27px]", rim)}>
      <div className="flex h-full w-0 grow items-center gap-12 overflow-hidden pt-0.5 [mask-image:linear-gradient(to_right,#000_calc(100%-36px),transparent)]">
        {OVERLAYS.map(renderItem)}
        <span className="-mx-6 h-[30px] w-px shrink-0 bg-[#39414d]" />
        {OSCILLATORS.map(renderItem)}
      </div>
      <button aria-label="Indicator settings" className="ml-2 shrink-0">
        <svg viewBox="0 0 34 34" className="size-[34px]" fill="none" stroke="#eef0f4" strokeWidth="3">
          <path d="M1.500 0v32H34M6 27l9-11 5 6L32 11" />
          <path d="M7 2.500h9L11.500 8z" fill="#eef0f4" stroke="none" />
        </svg>
      </button>
    </div>
  );
}

const RETURNS = [
  ["Today", "9.22%"],
  ["7 Days", "96.93%"],
  ["30 Days", "88.70%"],
  ["90 Days", "68.01%"],
  ["180 Days", "70.41%"],
  ["1 Year", "-77.20%"],
];

function Returns() {
  return (
    <dl className="grid grid-cols-6 border-b border-[#2e353f] pt-[13px] pr-9 pb-[11px] pl-10 text-[24px] leading-[33px]">
      {RETURNS.map(([label, value]) => (
        <div key={label}>
          <dt className={clsx("tabular-nums", rim)}>{label}</dt>
          <dd className={hollow}>{value}</dd>
        </div>
      ))}
    </dl>
  );
}

const BOOK_TABS = ["Order Book", "Depth", "Trades", "Network"];

function OrderBook() {
  const [tab, setTab] = useState("Order Book");
  return (
    <section className="pt-[26px]">
      <div className="flex gap-[18px] px-9">
        {BOOK_TABS.map((name) => (
          <button
            key={name}
            onClick={() => setTab(name)}
            className={clsx("h-[57px] rounded-xl px-[22px] pt-0.5 text-[27px] font-medium", rim, tab === name && "bg-[#29313c]")}
          >
            {name}
          </button>
        ))}
      </div>
      <table className={clsx("mt-[18px] w-full table-fixed text-[24px]", rim)}>
        <thead>
          <tr className="h-[59px] text-left">
            <th colSpan={2} className="p-0 pl-[38px] font-medium">Bid</th>
            <th className="p-0 pl-2 font-medium">Ask</th>
            <th className="p-0 pr-9 text-right font-medium">
              <span className="relative inline-block align-middle">
                <select aria-label="Price step" defaultValue="0.0001" className="h-[38px] w-[145px] appearance-none rounded-md bg-[#29313c] pl-[11px] text-[24px] tabular-nums">
                  <option>0.0001</option>
                  <option>0.001</option>
                  <option>0.01</option>
                </select>
                <Caret className="pointer-events-none absolute top-[13px] right-[19px] h-3 w-[18px] text-[#6d7686]" />
              </span>
            </th>
          </tr>
        </thead>
        <tbody className="text-[28px] leading-8">
          {Array.from({ length: 7 }, (_, i) => (
            <tr key={i} className="odd:h-12 even:h-[47px]">
              <td className="p-0 pl-[38px]">--</td>
              <td className={clsx("p-0 pr-2 text-right", hollow)}>--</td>
              <td className={clsx("p-0 pl-2", hollow)}>--</td>
              <td className="p-0 pr-[38px] text-right">--</td>
            </tr>
          ))}
        </tbody>
      </table>
    </section>
  );
}

function ActionBar() {
  return (
    <div className="flex items-center gap-[19px] pt-2 pr-9 pl-[46px]">
      <div className={clsx("flex text-[22px] leading-7", rim)}>
        <button className="flex w-[74px] flex-col items-center gap-[8px]">
          <svg viewBox="0 0 42 42" className="size-[42px]" fill="none" stroke="#eef0f4" strokeWidth="3">
            <circle cx="21" cy="21" r="19" />
            <path d="M10 21h5M18.500 21h5M27 21h5" strokeWidth="5" />
          </svg>
          More
        </button>
        <button className="ml-[21px] flex w-[74px] flex-col items-center gap-[8px]">
          <svg viewBox="0 0 42 42" className="size-[42px]" fill="none" stroke="#eef0f4" strokeWidth="3">
            <rect x="4" y="4" width="13" height="13" rx="1.500" />
            <path d="m31 2 8.500 9L31 19.500 22.500 11z" strokeLinejoin="round" />
            <circle cx="10.500" cy="31.500" r="7.500" />
            <rect x="25" y="25" width="13" height="14" rx="1.500" />
          </svg>
          Hub
        </button>
        <button className="ml-[21px] flex w-[76px] flex-col items-center gap-[8px]">
          <svg viewBox="0 0 42 42" className="size-[42px]" fill="none" stroke="#eef0f4" strokeWidth="3">
            <path d="M5 38 37 6M22 4.500h16.500V21" />
            <path d="m11 7 5.500 6L11 19l-5.500-6zM29 25.500l5.500 6-5.500 6-5.500-6z" strokeLinejoin="round" />
          </svg>
          Margin
        </button>
      </div>
      <div className={clsx("ml-2 flex grow gap-[19px] text-[30px] font-medium", rim)}>
        <button className="h-[86px] flex-1 rounded-2xl bg-[#2ebd85]">Buy</button>
        <button className="h-[86px] flex-1 rounded-2xl bg-[#f6465d]">Sell</button>
      </div>
    </div>
  );
}

const SQUIRCLE = "M39 0c29 0 38 10 38 38.500S68 77 39 77 0 67 0 38.500 10 0 39 0z";

function Dock() {
  return (
    <nav className="relative flex items-center pt-[43px] pb-[18px]">
      <button aria-label="Recent apps panel" className="ml-[10px]">
        <svg viewBox="0 0 48 46" className="h-[46px] w-12" fill="none" stroke="#fff" strokeWidth="4">
          <path d="M15 40H9a7 7 0 0 1-7-7V10a7 7 0 0 1 7-7h30a7 7 0 0 1 7 7v23a7 7 0 0 1-7 7h-5" />
          <path d="M16 43c-2-6 2-10 8-10s10 4 8 10z" strokeWidth="3" strokeLinejoin="round" />
          <path d="M23 10v11h9" />
        </svg>
      </button>
      <button aria-label="All apps" className="ml-[27px]">
        <svg viewBox="0 0 32 32" className="size-8" fill="#fff">
          {[3, 16, 29].map((cy) => [3, 16, 29].map((cx) => <circle key={`${cx}-${cy}`} cx={cx} cy={cy} r="3" />))}
        </svg>
      </button>
      <div className="ml-[297px] flex items-center gap-[50px]">
        <button aria-label="My Files">
          <svg viewBox="0 0 77 77" className="size-[77px]">
            <defs>
              <linearGradient id="files" x1="0" y1="0" x2="0" y2="1">
                <stop offset="0" stopColor="#fbae04" />
                <stop offset="1" stopColor="#f68f0a" />
              </linearGradient>
            </defs>
            <path d={SQUIRCLE} fill="url(#files)" />
            <path d="M15 21q0-4 4-4h14q4 0 4 4l2 6H15z" fill="#fdd595" />
            <rect x="15" y="23" width="48" height="36" rx="5" fill="#fff" />
          </svg>
        </button>
        <button aria-label="Camera">
          <svg viewBox="0 0 77 77" className="size-[77px]">
            <path d={SQUIRCLE} fill="#e2104f" />
            <rect x="15" y="20" width="48" height="37" rx="7" fill="#fff" />
            <circle cx="38.500" cy="39" r="9.500" fill="#d6094e" />
            <circle cx="54" cy="29" r="4.500" fill="#e23b56" />
          </svg>
        </button>
        <button aria-label="Gallery">
          <svg viewBox="0 0 77 77" className="size-[77px]">
            <path d={SQUIRCLE} fill="#cf0468" />
            {[0, 60, 120, 180, 240, 300].map((a) => (
              <ellipse key={a} cx="38.500" cy="23.500" rx="7" ry="9.500" fill="#fff" transform={`rotate(${a} 38.500 38.500)`} />
            ))}
            <circle cx="38.500" cy="38.500" r="8" fill="#fff" />
            <circle cx="38.500" cy="38.500" r="5.500" fill="#cf0468" />
          </svg>
        </button>
      </div>
      <span className="mx-10 h-12 w-[3px] rounded bg-[#6d727a]" />
      <div className="flex items-center gap-[50px]">
        <button aria-label="YouTube">
          <svg viewBox="0 0 77 77" className="size-[77px]">
            <path d={SQUIRCLE} fill="#fff" />
            <rect x="10" y="19" width="57" height="39" rx="8" fill="#ff0232" />
            <path d="m33 30 14 8.500L33 47z" fill="#fff" />
          </svg>
        </button>
        <button aria-label="DeepSeek">
          <svg viewBox="0 0 77 77" className="size-[77px]">
            <path d={SQUIRCLE} fill="#fff" />
            <path
              d="M68 23c-3 0-5 1-7.500 3.500-3-1.500-6-3.500-8.500-7.500-2.500 4-1 10 3.500 13.500 0 4-1 8-3.500 10.500-2-8-8-11-11-14.500-1.500-3-1-6 .5-8-3-1-6-1-9 0-12-1-21 7-21.500 19C11 52 21 62 33 62c7 0 12-2.500 15-5 3 1.500 6 1.500 9.500 0-2-1-3.500-2.500-4-4 5-6 6.500-12 6-18 5-1.500 8.500-5 8.500-12zM15.500 35c7-.5 13 3 17 9 3 5 5 9 8.500 11.500-3.500.5-7-2-10-5-1 2-.500 4 0 6.500C22 54 15 45 15.500 35z"
              fill="#4d6bfe"
              fillRule="evenodd"
            />
            <path d="M40.500 37c3-1 6.500 2 7.500 6-3.500 1.500-6.500-1-7.500-6z" fill="#fff" />
          </svg>
        </button>
      </div>
      <button aria-label="Recents" className="ml-[109px]">
        <svg viewBox="0 0 36 38" className="h-[38px] w-9" stroke="#fff" strokeWidth="3.500" strokeLinecap="round">
          <path d="M2 2v34M18 2v34M34 2v34" />
        </svg>
      </button>
      <button aria-label="Home" className="ml-28">
        <svg viewBox="0 0 38 38" className="size-[38px]" fill="none" stroke="#fff" strokeWidth="3.500">
          <rect x="2" y="2" width="34" height="34" rx="10" />
        </svg>
      </button>
      <button aria-label="Back" className="ml-[121px]">
        <svg viewBox="0 0 24 40" className="h-10 w-6" fill="none" stroke="#fff" strokeWidth="3.500" strokeLinecap="round">
          <path d="M21 2 3 20l18 18" />
        </svg>
      </button>
      <p className="absolute right-[9px] bottom-2 flex items-center gap-1 font-['Noto_Sans',sans-serif] text-[24px] leading-9 text-[#d5d7da]">
        <BinanceMark className="size-7" />
        @ AI Block Chain
      </p>
    </nav>
  );
}

export default function App() {
  return (
    <main className="w-full bg-[#1f252f] font-['Inter',sans-serif] whitespace-nowrap">
      <StatusBar />
      <Header />
      <SectionTabs />
      <Summary />
      <IntervalBar />
      <PricePane />
      <VolumePane />
      <RsiPane />
      <IndicatorBar />
      <Returns />
      <OrderBook />
      <ActionBar />
      <Dock />
    </main>
  );
}
